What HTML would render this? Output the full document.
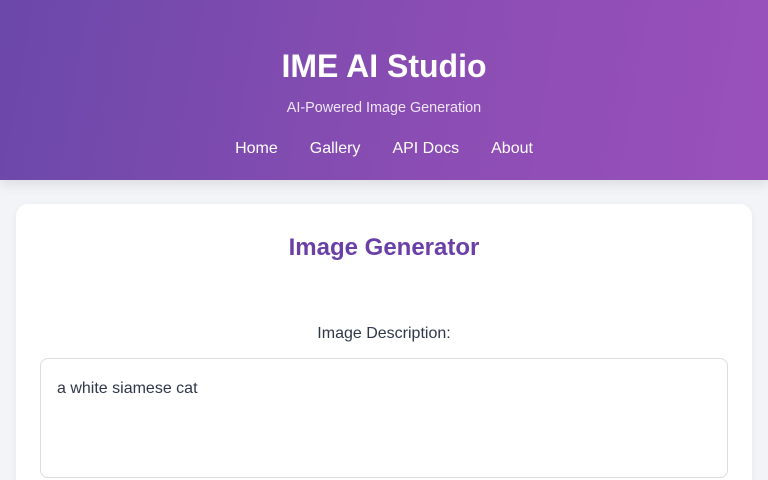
<!DOCTYPE html>
<html><head><meta charset="utf-8"><style>
*{box-sizing:border-box;margin:0;padding:0}
html,body{width:768px;height:480px;overflow:hidden}
body{background:#f3f4f8;font-family:"Liberation Sans",sans-serif;position:relative}
header{height:180px;background:linear-gradient(100deg,#6b48aa 0%,#8a4db3 55%,#9a50bb 100%);box-shadow:0 4px 12px rgba(0,0,0,.1);text-align:center;color:#fff;position:relative}
h1{position:absolute;top:46px;width:100%;font-size:32px;font-weight:bold;line-height:40px}
.sub{position:absolute;top:100px;width:100%;font-size:14.4px;color:#f0e6f8}
nav{position:absolute;top:140px;width:100%;font-size:16px}
nav span{margin:0 16px}
.card{position:absolute;left:16px;top:204px;width:736px;height:290px;background:#fff;border-radius:12px;box-shadow:0 2px 8px rgba(0,0,0,.05)}
h2{position:absolute;top:30px;width:100%;text-align:center;color:#6a40a8;font-size:24px;font-weight:bold}
.lbl{position:absolute;top:121px;width:100%;text-align:center;color:#2d3748;font-size:16px}
.ta{position:absolute;left:24px;top:154px;width:688px;height:120px;border:1px solid #dcdcdc;border-radius:8px;padding:21px 16px;font-size:16px;color:#2d3748}
</style></head><body>
<header><h1>IME AI Studio</h1><div class="sub">AI-Powered Image Generation</div>
<nav><span>Home</span><span>Gallery</span><span>API Docs</span><span>About</span></nav></header>
<div class="card"><h2>Image Generator</h2><div class="lbl">Image Description:</div><div class="ta">a white siamese cat</div></div>
</body></html>
